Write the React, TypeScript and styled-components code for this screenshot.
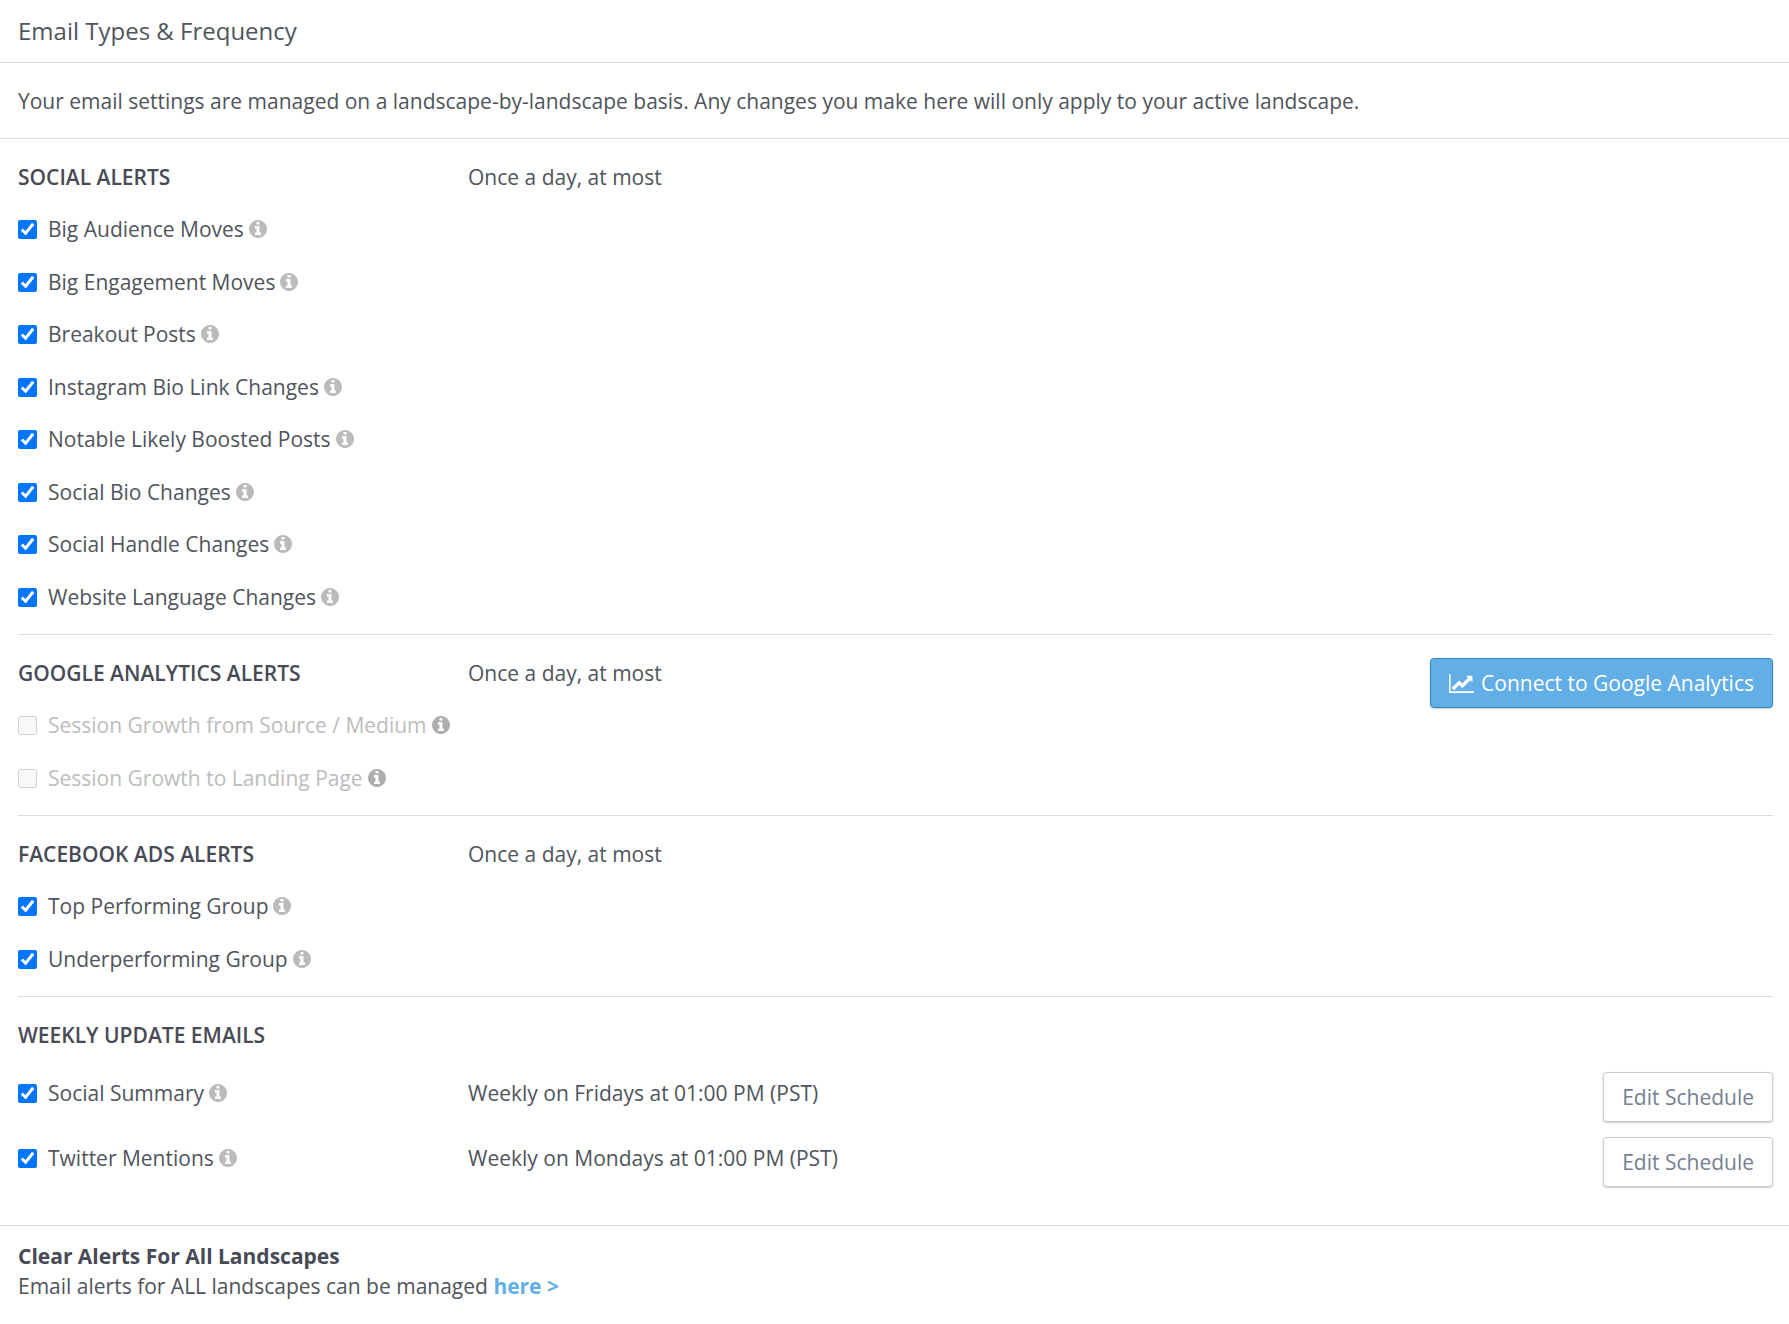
import React from 'react';
import styled, { createGlobalStyle } from 'styled-components';

const Global = createGlobalStyle`
  * { box-sizing: border-box; }
  body {
    margin: 0;
    background: #fff;
    color: #50545c;
    font-family: "Open Sans", sans-serif;
    font-size: 21px;
    line-height: 30px;
  }
`;

const Header = styled.header`
  padding: 16px 18px;
  border-bottom: 1px solid #dadcde;
`;

const Title = styled.h1`
  margin: 0;
  font-size: 24px;
  font-weight: 400;
  line-height: 30px;
`;

const Notice = styled.p`
  margin: 0;
  padding: 23px 18px 22px;
  border-bottom: 1px solid #dadcde;
`;

const Groups = styled.main`
  padding: 0 16px 0 18px;
`;

const Group = styled.section`
  padding: 23px 0 22px;
  & + & { border-top: 1px solid #dadcde; }
`;

const Row = styled.div`
  display: grid;
  grid-template-columns: 450px 1fr auto;
  align-items: start;
`;

const GroupTitle = styled.h2`
  margin: 0;
  color: #484b55;
  font-size: 21px;
  font-weight: 600;
  line-height: 30px;
`;

const Action = styled.div`
  height: 30px;
`;

const Options = styled.ul`
  display: grid;
  gap: 22px;
  margin: 22px 0 0;
  padding: 0;
  list-style: none;
`;

const OptionItem = styled.li`
  height: 30px;
  &:nth-child(odd) { height: 31px; }
`;

const OptionLabel = styled.label<{ $muted?: boolean }>`
  display: flex;
  align-items: center;
  width: fit-content;
  color: ${(p) => (p.$muted ? '#bcbcbe' : 'inherit')};
`;

const Check = styled.input`
  width: 19px;
  height: 19px;
  margin: 0 11px 0 0;
`;

const InfoIcon = styled.svg<{ $dark?: boolean }>`
  width: 18px;
  height: 18px;
  margin-left: 5px;
  fill: ${(p) => (p.$dark ? '#adadad' : '#bbbbbb')};
`;

const ChartIcon = styled.svg`
  width: 25px;
  height: 19px;
  fill: currentColor;
`;

const Button = styled.button<{ $primary?: boolean }>`
  display: flex;
  align-items: center;
  gap: 7px;
  height: 50px;
  padding: 0 18px;
  border: 1px solid ${(p) => (p.$primary ? '#2e86c4' : '#c8cacc')};
  border-radius: 4px;
  background: ${(p) => (p.$primary ? '#62aee7' : '#fff')};
  box-shadow: 0 1px 2px rgba(0, 0, 0, 0.2);
  color: ${(p) => (p.$primary ? '#fff' : '#758092')};
  font: inherit;
`;

const Schedules = styled.div`
  display: grid;
  gap: 15px;
  padding: 22px 0 16px;
`;

const ScheduleCell = styled.div`
  padding-top: 6px;
`;

const Footer = styled.footer`
  padding: 15px 18px;
  border-top: 1px solid #dadcde;
`;

const Strong = styled.strong`
  display: block;
  color: #484b55;
  font-weight: 700;
`;

const Link = styled.a`
  color: #62aee7;
  font-weight: 700;
  text-decoration: none;
`;

function Info({ dark }: { dark?: boolean }) {
  return (
    <InfoIcon $dark={dark} viewBox="0 128 1536 1536" aria-hidden="true">
      <path d="M1024 1376v-160q0-14-9-23t-23-9h-96v-512q0-14-9-23t-23-9h-320q-14 0-23 9t-9 23v160q0 14 9 23t23 9h96v320h-96q-14 0-23 9t-9 23v160q0 14 9 23t23 9h448q14 0 23-9t9-23zm-128-896v-160q0-14-9-23t-23-9h-192q-14 0-23 9t-9 23v160q0 14 9 23t23 9h192q14 0 23-9t9-23zm640 416q0 209-103 385.5t-279.5 279.5-385.5 103-385.5-103-279.5-279.5-103-385.5 103-385.5 279.5-279.5 385.5-103 385.5 103 279.5 279.5 103 385.5z" />
    </InfoIcon>
  );
}

function Chart() {
  return (
    <ChartIcon viewBox="0 128 2048 1536" aria-hidden="true">
      <path d="M2048 1536v128h-2048v-1536h128v1408h1920zm-128-1248v435q0 21-19.5 29.5t-35.5-7.5l-121-121-633 633q-10 10-23 10t-23-10l-233-233-416 416-192-192 585-585q10-10 23-10t23 10l233 233 464-464-121-121q-16-16-7.5-35.5t29.5-19.5h435q14 0 23 9t9 23z" />
    </ChartIcon>
  );
}

function Option({ name, disabled }: { name: string; disabled?: boolean }) {
  return (
    <OptionLabel $muted={disabled}>
      <Check type="checkbox" defaultChecked={!disabled} disabled={disabled} />
      {name}
      <Info dark={disabled} />
    </OptionLabel>
  );
}

const alertGroups = [
  {
    title: 'SOCIAL ALERTS',
    options: [
      'Big Audience Moves',
      'Big Engagement Moves',
      'Breakout Posts',
      'Instagram Bio Link Changes',
      'Notable Likely Boosted Posts',
      'Social Bio Changes',
      'Social Handle Changes',
      'Website Language Changes',
    ],
  },
  {
    title: 'GOOGLE ANALYTICS ALERTS',
    connect: true,
    options: ['Session Growth from Source / Medium', 'Session Growth to Landing Page'],
  },
  { title: 'FACEBOOK ADS ALERTS', options: ['Top Performing Group', 'Underperforming Group'] },
];

const schedules = [
  { name: 'Social Summary', when: 'Weekly on Fridays at 01:00 PM (PST)' },
  { name: 'Twitter Mentions', when: 'Weekly on Mondays at 01:00 PM (PST)' },
];

export default function App() {
  return (
    <>
      <Global />
      <Header>
        <Title>Email Types &amp; Frequency</Title>
      </Header>
      <Notice>
        Your email settings are managed on a landscape-by-landscape basis. Any changes you make here
        will only apply to your active landscape.
      </Notice>
      <Groups>
        {alertGroups.map((group) => (
          <Group key={group.title}>
            <Row>
              <GroupTitle>{group.title}</GroupTitle>
              <span>Once a day, at most</span>
              {group.connect && (
                <Action>
                  <Button type="button" $primary>
                    <Chart />
                    Connect to Google Analytics
                  </Button>
                </Action>
              )}
            </Row>
            <Options>
              {group.options.map((name) => (
                <OptionItem key={name}>
                  <Option name={name} disabled={group.connect} />
                </OptionItem>
              ))}
            </Options>
          </Group>
        ))}
        <Group>
          <GroupTitle>WEEKLY UPDATE EMAILS</GroupTitle>
          <Schedules>
            {schedules.map((s) => (
              <Row key={s.name}>
                <ScheduleCell>
                  <Option name={s.name} />
                </ScheduleCell>
                <ScheduleCell>{s.when}</ScheduleCell>
                <Button type="button">Edit Schedule</Button>
              </Row>
            ))}
          </Schedules>
        </Group>
      </Groups>
      <Footer>
        <Strong>Clear Alerts For All Landscapes</Strong>
        Email alerts for ALL landscapes can be managed <Link href="#">here &gt;</Link>
      </Footer>
    </>
  );
}
